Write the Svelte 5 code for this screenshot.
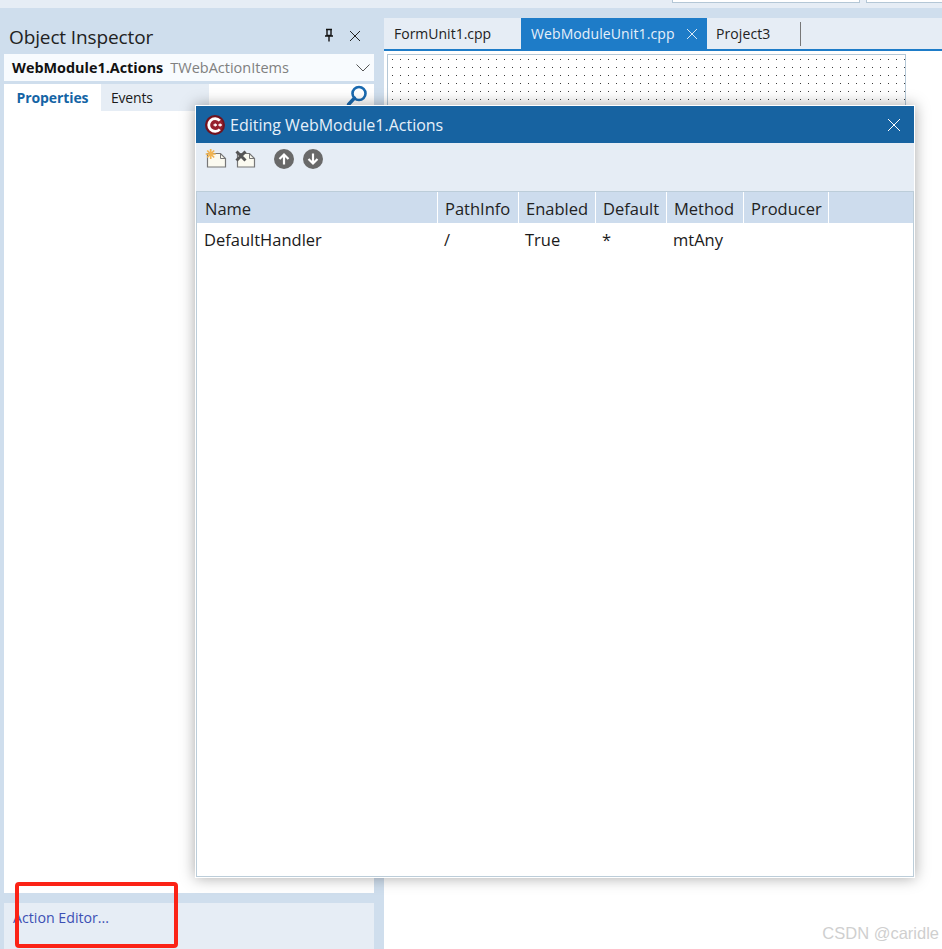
<script>
  const columns = [
    { name: 'Name', width: 241, value: 'DefaultHandler' },
    { name: 'PathInfo', width: 81, value: '/' },
    { name: 'Enabled', width: 77, value: 'True' },
    { name: 'Default', width: 71, value: '*' },
    { name: 'Method', width: 77, value: 'mtAny' },
    { name: 'Producer', width: 85, value: '' }
  ];

  const tabs = [
    { label: 'FormUnit1.cpp', width: 137 },
    { label: 'WebModuleUnit1.cpp', width: 186, active: true },
    { label: 'Project3', width: 93 }
  ];
</script>

<div class="page">
  <header class="topbar">
    <div class="topfield first"></div>
    <div class="topfield second"></div>
  </header>

  <div class="main">
    <aside class="inspector">
      <div class="title-row">
        <span class="title">Object Inspector</span>
        <svg class="pin" width="12" height="14" viewBox="0 0 12 14" fill="none">
          <path d="M3 1.5H9M4 1.5V7.5H8V1.5M2 8H10M6 8V13.5" stroke="#111" stroke-width="1.4" />
        </svg>
        <svg class="close" width="12" height="12" viewBox="0 0 12 12" fill="none">
          <path d="M1 1L11 11M11 1L1 11" stroke="#222" stroke-width="1" />
        </svg>
      </div>

      <div class="selector">
        <b>WebModule1.Actions</b>
        <span>TWebActionItems</span>
        <svg class="chevron" width="14" height="8" viewBox="0 0 14 8" fill="none">
          <path d="M0.5 0.5L7 7L13.5 0.5" stroke="#555" stroke-width="1" />
        </svg>
      </div>

      <div class="oi-tabs">
        <div class="oi-tab current">Properties</div>
        <div class="oi-tab">Events</div>
        <div class="search">
          <svg width="22" height="22" viewBox="0 0 22 22" fill="none">
            <circle cx="13" cy="8.5" r="6.5" stroke="#1a6ab0" stroke-width="2.6" />
            <path d="M8.5 13L2.5 19.5" stroke="#1a6ab0" stroke-width="3.4" stroke-linecap="round" />
          </svg>
        </div>
      </div>

      <div class="grid-area"></div>
      <div class="verbs"><span>Action Editor...</span></div>
    </aside>

    <section class="editor">
      <nav class="tabs">
        {#each tabs as tab}
          <div class="tab" class:active={tab.active} style="width: {tab.width}px">
            <span>{tab.label}</span>
            {#if tab.active}
              <svg width="12" height="12" viewBox="0 0 12 12" fill="none">
                <path d="M1 1L11 11M11 1L1 11" stroke="#d8e8f5" stroke-width="1" />
              </svg>
            {/if}
          </div>
        {/each}
        <div class="tab-sep"></div>
      </nav>
      <div class="canvas">
        <div class="designer"></div>
      </div>
    </section>
  </div>

  <div class="dialog">
    <div class="dialog-title">
      <svg class="logo" width="22" height="22" viewBox="0 0 22 22">
        <circle cx="11" cy="11" r="10" fill="#6e1420" />
        <circle cx="11" cy="11" r="8" fill="#96202c" />
        <path d="M15.8 6.6A6.4 6.4 0 1 0 15.8 15.4" fill="none" stroke="#fff" stroke-width="2.8" />
        <path d="M9.5 11H13M11.25 9.4V12.6M14.4 11H17.9M16.15 9.4V12.6" stroke="#fff" stroke-width="1.3" />
      </svg>
      <span>Editing WebModule1.Actions</span>
      <svg class="dialog-close" width="14" height="14" viewBox="0 0 14 14" fill="none">
        <path d="M1 1L13 13M13 1L1 13" stroke="#fff" stroke-width="1" />
      </svg>
    </div>

    <div class="toolbar">
      <svg width="22" height="21" viewBox="0 0 22 21" fill="none">
        <path d="M2.5 6.5H15.5L20.5 11.5V20H2.5Z" fill="#fbfaf0" stroke="#777" stroke-width="1.2" />
        <path d="M15.5 6.5V11.5H20.5" stroke="#777" stroke-width="1" />
        <path d="M5.7 2V12M0.7 7H10.7M2.2 3.5L9.2 10.5M9.2 3.5L2.2 10.5" stroke="#f2b552" stroke-width="1.7" />
      </svg>
      <svg class="delete-icon" width="22" height="21" viewBox="0 0 22 21" fill="none">
        <path d="M3.5 6.5H15.5L20.5 11.5V20H3.5Z" fill="#fbfaf0" stroke="#777" stroke-width="1.2" />
        <path d="M15.5 6.5V11.5H20.5" stroke="#777" stroke-width="1" />
        <path d="M2.5 4.5L11.5 13.5M11.5 4.5L2.5 13.5" stroke="#555" stroke-width="3" />
      </svg>
      <svg class="arrow first-arrow" width="20" height="20" viewBox="0 0 20 20" fill="none">
        <circle cx="10" cy="10" r="10" fill="#696969" />
        <path d="M10 15.5V5.5M5.5 10L10 5.5L14.5 10" stroke="#fff" stroke-width="2.2" />
      </svg>
      <svg class="arrow" width="20" height="20" viewBox="0 0 20 20" fill="none">
        <circle cx="10" cy="10" r="10" fill="#696969" />
        <path d="M10 4.5V14.5M5.5 10L10 14.5L14.5 10" stroke="#fff" stroke-width="2.2" />
      </svg>
    </div>

    <div class="list">
      <div class="list-head">
        {#each columns as col}
          <div class="head-cell" style="width: {col.width}px">{col.name}</div>
        {/each}
      </div>
      <div class="list-row">
        {#each columns as col}
          <div class="row-cell" style="width: {col.width}px">{col.value}</div>
        {/each}
      </div>
    </div>
  </div>

  <div class="annotation"></div>
  <div class="watermark">CSDN @caridle</div>
</div>

<style>
  :global(body) {
    margin: 0;
  }

  .page {
    position: relative;
    display: flex;
    flex-direction: column;
    width: 942px;
    height: 949px;
    overflow: hidden;
    background: #cfdeed;
    font-family: 'Open Sans', 'Noto Sans', sans-serif;
    color: #1a1a1a;
  }

  .topbar {
    display: flex;
    flex: none;
    gap: 6px;
    height: 8px;
    padding-left: 672px;
    background: #e6edf5;
  }

  .topfield {
    height: 2px;
    background: #fff;
    border: 1px solid #b4c7d6;
    border-top: none;
  }

  .first {
    width: 186px;
  }

  .second {
    flex: 1;
    border-right: none;
  }

  .main {
    display: flex;
    flex: 1;
    min-height: 0;
    padding: 10px 0 0 4px;
    gap: 10px;
  }

  .inspector {
    display: flex;
    flex-direction: column;
    flex: none;
    width: 370px;
  }

  .title-row {
    display: flex;
    align-items: center;
    flex: none;
    height: 36px;
    padding: 2px 13px 0 5px;
    box-sizing: border-box;
  }

  .title {
    flex: 1;
    font-size: 19px;
    letter-spacing: -0.12px;
    color: #222;
  }

  .pin {
    margin-right: 14px;
    margin-bottom: 5px;
    margin-left: -1px;
  }

  .close {
    margin-bottom: 3px;
  }

  .selector {
    display: flex;
    align-items: center;
    flex: none;
    gap: 7px;
    height: 27px;
    padding: 0 4px 0 8px;
    background: #f8fbfe;
    font-size: 14.4px;
  }

  .selector b {
    color: #111;
  }

  .selector span {
    flex: 1;
    color: #808080;
    font-size: 14.5px;
  }

  .oi-tabs {
    display: flex;
    flex: none;
    height: 27px;
    margin-top: 3px;
    font-size: 14px;
    background: #fff;
  }

  .oi-tab {
    display: flex;
    align-items: center;
    justify-content: center;
    width: 97px;
    background: #e6edf5;
    letter-spacing: -0.2px;
  }

  .oi-tab + .oi-tab {
    width: 108px;
    justify-content: flex-start;
    padding-left: 10px;
    box-sizing: border-box;
  }

  .current {
    background: #fff;
    color: #1464a5;
    font-weight: 700;
    letter-spacing: -0.1px;
  }

  .search {
    display: flex;
    flex: 1;
    justify-content: flex-end;
    align-items: flex-start;
    padding: 1px 6px 0 0;
  }

  .grid-area {
    flex: 1;
    background: #fff;
  }

  .verbs {
    display: flex;
    align-items: center;
    flex: none;
    height: 46px;
    margin-top: 10px;
    padding-left: 9px;
    padding-bottom: 18px;
    box-sizing: border-box;
    background: #e6edf5;
    font-size: 14.2px;
    color: #3c50b4;
  }

  .editor {
    display: flex;
    flex-direction: column;
    flex: 1;
    min-width: 0;
  }

  .tabs {
    display: flex;
    align-items: center;
    flex: none;
    height: 31px;
    background: #e6edf5;
    border-bottom: 2px solid #1e7cc8;
    font-size: 14px;
    color: #222;
  }

  .tab {
    display: flex;
    align-items: center;
    gap: 11px;
    height: 100%;
    padding-left: 10px;
    box-sizing: border-box;
  }

  .tab:nth-child(3) {
    padding-left: 9px;
    letter-spacing: 0.1px;
  }

  .active {
    background: #1e7cc8;
    color: #e6f0fa;
    letter-spacing: 0.1px;
  }

  .tab-sep {
    width: 1px;
    height: 24px;
    margin-top: 1px;
    background: #777;
  }

  .canvas {
    flex: 1;
    padding: 3px 0 0 3px;
    background: #fff;
  }

  .designer {
    width: 517px;
    height: 60px;
    border: 1px solid #b4c7d6;
    background-color: #fff;
    background-image: radial-gradient(circle at 0.5px 0.5px, #3a3a3a 0.5px, transparent 0.7px);
    background-size: 8px 8px;
    background-position: 4px 4px;
  }

  .dialog {
    position: absolute;
    left: 195px;
    top: 105px;
    display: flex;
    flex-direction: column;
    width: 720px;
    height: 773px;
    box-sizing: border-box;
    border: 1px solid #fff;
    background: #e6edf5;
    box-shadow: 0 0 14px rgba(0, 0, 0, 0.35);
  }

  .dialog-title {
    display: flex;
    align-items: center;
    flex: none;
    gap: 4px;
    height: 37px;
    padding: 0 13px 0 8px;
    background: #1763a1;
    color: #e6f0fa;
    font-size: 16px;
  }

  .dialog-title span {
    flex: 1;
  }

  .toolbar {
    display: flex;
    align-items: flex-start;
    flex: none;
    height: 48px;
    padding: 4px 0 0 9px;
    box-sizing: border-box;
  }

  .delete-icon {
    margin-left: 7px;
  }

  .arrow {
    margin-left: 9px;
    margin-top: 2px;
  }

  .first-arrow {
    margin-left: 18px;
  }

  .list {
    flex: 1;
    border: 1px solid #bccdd9;
    background: #fff;
    font-size: 16.5px;
  }

  .list-head {
    display: flex;
    height: 31px;
    background: #cddced;
  }

  .head-cell {
    display: flex;
    align-items: center;
    flex: none;
    padding: 1px 0 0 7px;
    box-sizing: border-box;
    border-right: 1px solid #fff;
    color: #222;
  }

  .head-cell:first-child {
    padding-left: 8px;
  }

  .list-row {
    display: flex;
    height: 32px;
  }

  .row-cell {
    display: flex;
    align-items: center;
    flex: none;
    padding-left: 6px;
    box-sizing: border-box;
  }

  .row-cell:first-child {
    padding-left: 7px;
  }

  .annotation {
    position: absolute;
    left: 15px;
    top: 882px;
    width: 155px;
    height: 58px;
    border: 4px solid #fb2316;
    border-radius: 4px;
  }

  .watermark {
    position: absolute;
    right: 3px;
    bottom: 6px;
    font-family: 'Liberation Sans', sans-serif;
    font-size: 16.5px;
    color: #cfcfcf;
  }
</style>
